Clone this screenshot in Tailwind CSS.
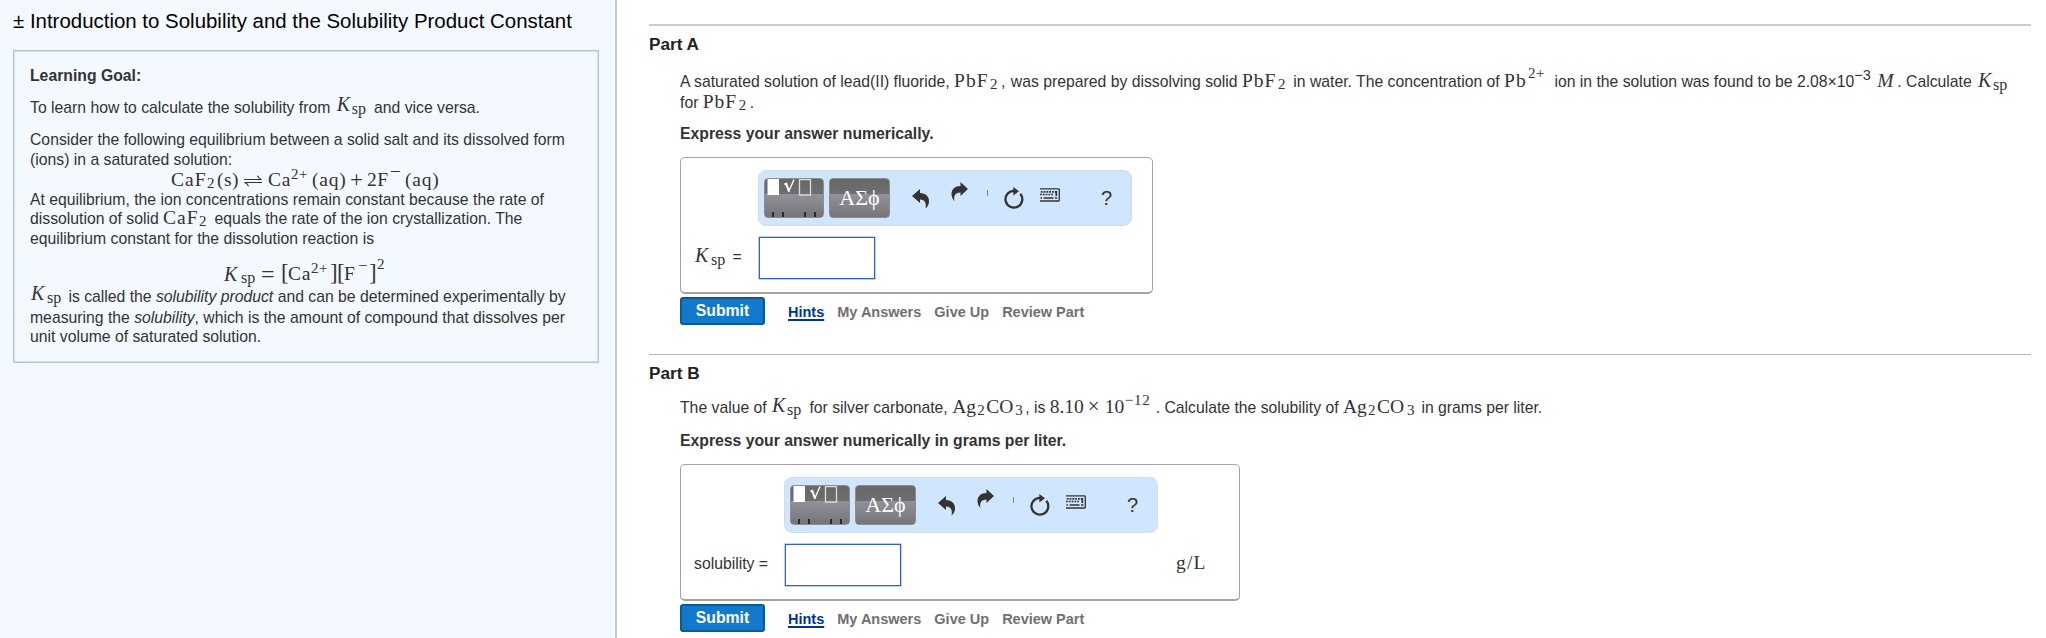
<!DOCTYPE html>
<html lang="en">
<head>
    <meta charset="UTF-8" />
    <meta name="viewport" content="width=device-width, initial-scale=1.0" />
    <title>Introduction to Solubility and the Solubility Product Constant</title>
    <script src="https://cdn.jsdelivr.net/npm/@tailwindcss/browser@4"></script>
</head>
<body class="bg-white font-['Liberation_Sans',Arial,sans-serif] text-[15.750px] leading-[20px] text-[#333] whitespace-nowrap">
    <!-- Shared icons -->
    <svg class="hidden">
        <symbol id="undo" viewBox="0 0 18 20">
            <path fill="#333" d="M0 7 L8 0 V4 C14 4 17 8 17 12 C17 15 16 18 13.5 19.5 C14.5 15 13.5 10.5 8 10.5 V14 Z"/>
        </symbol>
        <symbol id="redo" viewBox="0 0 18 20">
            <path fill="#333" d="M17 7 L9.5 0 V4 C4 4 0.5 7.500 0.500 12 C0.500 14.500 1.500 17 3.500 19 C2.500 14 4 10.500 9.500 10.500 V14 Z"/>
        </symbol>
        <symbol id="reset" viewBox="0 0 20 22">
            <path fill="none" stroke="#333" stroke-width="2.300" d="M10 3.800 A8.400 8.400 0 1 0 16.300 6.800"/>
            <path fill="#333" d="M9.300 0 L15 4.300 L9.300 8.600 Z"/>
        </symbol>
        <symbol id="keyboard" viewBox="0 0 20 14">
            <path fill="none" stroke="#333" stroke-width="1.300" d="M0 0.800 H18.500 Q19.300 0.800 19.300 1.600 V12.200 Q19.300 13 18.500 13 H0"/>
            <path fill="none" stroke="#333" stroke-width="1.700" stroke-dasharray="1.800 1" d="M0.800 3.800 H16 M0 6.500 H14"/>
            <path fill="none" stroke="#333" stroke-width="1.700" d="M0.500 10 H2 M3.500 10 H13.500 M15 10 H17.300 M16.300 3 V8"/>
        </symbol>
        <symbol id="templates" viewBox="0 0 60 40">
            <rect x="3.500" y="0" width="11.500" height="16" fill="#fff"/>
            <path fill="none" stroke="#fff" stroke-width="1.300" d="M24.500 13 L30 0.500"/>
            <path fill="none" stroke="#fff" stroke-width="2" d="M20.500 5.500 L22.300 4.800 L25 12.500"/>
            <rect x="35.500" y="0.600" width="11" height="15.400" fill="none" stroke="#ddd" stroke-width="1.300"/>
            <path stroke="#2b2b2b" stroke-width="2" d="M9 33 V38.500 M19 33 V38.500 M41 33 V38.500 M51 33 V38.500"/>
        </symbol>
    </svg>

    <div class="flex h-[638px] overflow-hidden">
        <!-- Introduction -->
        <div class="w-[617px] shrink-0 bg-[#f4f9ff] border-r-2 border-[#bccde1] pl-[13px] pt-[9px]">
            <h1 class="text-[20.46px] leading-[24px] text-black">± Introduction to Solubility and the Solubility Product Constant</h1>
            <div class="mt-[17px] w-[586px] h-[313px] border border-[#b0c4de] shadow-[inset_0_0_0_1px_#d3dfee] pl-[16px] pt-[15px]">
                <p class="h-[32px] font-bold">Learning Goal:</p>
                <p class="h-[32px]">To learn how to calculate the solubility from <span class="inline-block w-[35px] pl-[2px] leading-[0] font-['Liberation_Serif',serif]"><i class="inline-block w-[15px] text-[20px] relative -top-[2px]">K</i><span class="text-[16px] relative top-px">sp</span></span> and vice versa.</p>
                <p class="h-[20px]">Consider the following equilibrium between a solid salt and its dissolved form</p>
                <p class="h-[20px]">(ions) in a saturated solution:</p>
                <div class="h-[20px] pl-[141px] flex font-['Liberation_Serif',serif] text-[19.500px] leading-[20px]">
                    <span class="w-[36px] tracking-[1px]">CaF</span>
                    <span class="w-[10px] text-[15px] relative top-[3px]">2</span>
                    <span class="w-[27px] tracking-[0.500px]">(s)</span>
                    <svg class="w-[18px] h-[12px] mt-[5px]" viewBox="0 0 18 12"><path fill="none" stroke="#333" stroke-width="1.100" d="M0 4.500 H17.500 Q14.500 3.500 13.500 0.800 M18 7.500 H0.500 Q3.500 8.500 4.500 11.200"/></svg>
                    <span class="w-[23px] ml-[6px] tracking-[0.800px]">Ca</span>
                    <span class="w-[21px] text-[15px] relative -top-[6px] tracking-[0.500px]">2+</span>
                    <span class="w-[38px] tracking-[0.800px]">(aq)</span>
                    <span class="w-[17px] text-[23px]">+</span>
                    <span class="w-[23px] tracking-[0.500px]">2F</span>
                    <span class="w-[15px] text-[19px] relative -top-[8px]">−</span>
                    <span class="tracking-[0.800px]">(aq)</span>
                </div>
                <p class="h-[19px]">At equilibrium, the ion concentrations remain constant because the rate of</p>
                <p class="h-[20px]">dissolution of solid <span class="inline-block w-[47px] leading-[0] font-['Liberation_Serif',serif] text-[19.500px]"><span class="inline-block w-[36px] tracking-[1px]">CaF</span><span class="text-[15px] relative top-[2px]">2</span></span> equals the rate of the ion crystallization. The</p>
                <p class="h-[20px]">equilibrium constant for the dissolution reaction is</p>
                <div class="h-[38px] pl-[194px] pt-[15px] flex font-['Liberation_Serif',serif] text-[19.500px] leading-[20px]">
                    <i class="w-[17px] text-[20px]">K</i>
                    <span class="w-[20px] text-[16px] relative top-[4px]">sp</span>
                    <span class="w-[21px] text-[24px]">=</span>
                    <span class="w-[7px] text-[23px] -ml-px relative -top-px">[</span>
                    <span class="w-[23px] tracking-[0.800px]">Ca</span>
                    <span class="w-[20px] text-[15px] relative -top-[6px] tracking-[0.500px]">2+</span>
                    <span class="w-[7px] text-[23px] relative -top-px -ml-px">]</span>
                    <span class="w-[7px] text-[23px] relative -top-px">[</span>
                    <span class="w-[14px] tracking-[1px]">F</span>
                    <span class="w-[11px] text-[17px] relative -top-[8px]">−</span>
                    <span class="w-[8px] text-[23px] relative -top-px">]</span>
                    <span class="text-[15px] relative -top-[10px]">2</span>
                </div>
                <p class="h-[21px]"><span class="inline-block w-[34px] pl-px leading-[0] font-['Liberation_Serif',serif]"><i class="inline-block w-[16px] text-[20px] relative -top-[2px]">K</i><span class="text-[16px] relative top-px">sp</span></span> is called the <i>solubility product</i> and can be determined experimentally by</p>
                <p class="h-[19px]">measuring the <i>solubility</i>, which is the amount of compound that dissolves per</p>
                <p>unit volume of saturated solution.</p>
            </div>
        </div>

        <!-- Questions -->
        <div class="flex-1 pl-[32px] pr-[15px] pt-[24px]">
            <!-- Part A -->
            <section class="h-[330px] border-t-2 border-[#ccc]">
                <h2 class="pt-[8px] h-[46px] text-[17.200px] font-bold text-[#222]">Part A</h2>
                <div class="pl-[31px]">
                    <p class="h-[21px]">A saturated solution of lead(II) fluoride, <span class="inline-block w-[47px] leading-[0] font-['Liberation_Serif',serif] text-[19.500px]"><span class="inline-block w-[36px] tracking-[1px]">PbF</span><span class="text-[15px] relative top-[2px]">2</span></span>, <span class="ml-px">was</span> prepared by dissolving solid <span class="inline-block w-[47px] leading-[0] font-['Liberation_Serif',serif] text-[19.500px]"><span class="inline-block w-[36px] tracking-[1px]">PbF</span><span class="text-[15px] relative top-[2px]">2</span></span> in water. The concentration of <span class="inline-block w-[46px] leading-[0] font-['Liberation_Serif',serif] text-[19.500px]"><span class="inline-block w-[24px] tracking-[1px]">Pb</span><span class="text-[15px] relative -top-[9px] tracking-[0.500px]">2+</span></span> ion in the solution was found to be 2.08×10<span class="text-[14.500px] leading-[0] relative -top-[7px]">−3</span> <i class="inline-block w-[22px] pl-[2px] leading-[0] font-['Liberation_Serif',serif] text-[19.500px]">M</i>. Calculate <span class="inline-block w-[33px] pl-[2px] leading-[0] font-['Liberation_Serif',serif]"><i class="inline-block w-[15px] text-[20px]">K</i><span class="text-[16px] relative top-[3px]">sp</span></span></p>
                    <p class="h-[31px]">for <span class="inline-block w-[47px] leading-[0] font-['Liberation_Serif',serif] text-[19.500px]"><span class="inline-block w-[36px] tracking-[1px]">PbF</span><span class="text-[15px] relative top-[2px]">2</span></span>.</p>
                    <p class="h-[33px] font-bold">Express your answer numerically.</p>

                    <div class="w-[473px] h-[137px] border-[1.500px] border-[#a3a3a3] border-b-2 rounded-[5px] pl-[77px] pt-[12px]">
                        <div class="w-[374px] h-[56px] flex items-start rounded-[8px] border border-[#d8dade] bg-[#d0e6ff] pl-[5px]">
                            <button class="mt-[7px] w-[60px] h-[40px] rounded-[4px] border border-[#8d8d8d] bg-linear-to-b from-[#686868] from-0% via-[#6e6e6e] via-39% to-[#757577] overflow-hidden">
                                <span class="block w-full h-full bg-linear-to-b from-transparent from-40% via-[#93919b] via-40% to-[#757578]"><svg class="w-[60px] h-[40px] -ml-px"><use href="#templates"/></svg></span>
                            </button>
                            <button class="mt-[7px] ml-[5px] w-[61px] h-[40px] rounded-[4px] border border-[#8d8d8d] bg-linear-to-b from-[#686868] from-0% via-[#6e6e6e] via-39% to-[#757577] overflow-hidden">
                                <span class="block w-full h-full bg-linear-to-b from-transparent from-40% via-[#93919b] via-40% to-[#757578] font-['Liberation_Serif',serif] text-[22px] leading-[38px] text-white">ΑΣϕ</span>
                            </button>
                            <svg class="mt-[18px] ml-[22px] w-[18px] h-[20px]"><use href="#undo"/></svg>
                            <svg class="mt-[11px] ml-[21px] w-[18px] h-[20px]"><use href="#redo"/></svg>
                            <span class="mt-[19px] ml-[18px] w-px h-[6px] bg-[#7088a5]"></span>
                            <svg class="mt-[16px] ml-[16px] w-[20px] h-[22px]"><use href="#reset"/></svg>
                            <svg class="mt-[17px] ml-[16px] w-[20px] h-[14px]"><use href="#keyboard"/></svg>
                            <span class="mt-[17px] ml-[41px] text-[20px] leading-[20px]">?</span>
                        </div>
                        <div class="mt-[11px] -ml-[63px] flex">
                            <label class="w-[64px] pt-[10px]"><span class="inline-block w-[33px] leading-[0] font-['Liberation_Serif',serif]"><i class="inline-block w-[16px] text-[20px]">K</i><span class="text-[16px] relative top-[3px]">sp</span></span> =</label>
                            <input type="text" class="w-[116px] h-[42px] border-[1.500px] border-[#2f5fd0] bg-white shadow-[0_0_0_0.500px_#7da0ea]">
                        </div>
                    </div>
                    <div class="mt-[3px] flex font-bold text-[14.500px]">
                        <button class="w-[85px] h-[28px] rounded-[3px] border-2 border-[#0c5a94] bg-[#117acc] text-[15.750px] leading-[24px] text-white">Submit</button>
                        <a href="#" class="ml-[23px] mt-[5px] h-[20px] text-[#003399] underline underline-offset-2 decoration-2">Hints</a>
                        <a href="#" class="ml-[13px] mt-[5px] text-[#707070]">My Answers</a>
                        <a href="#" class="ml-[13px] mt-[5px] text-[#707070]">Give Up</a>
                        <a href="#" class="ml-[13px] mt-[5px] text-[#707070]">Review Part</a>
                    </div>
                </div>
            </section>

            <!-- Part B -->
            <section class="border-t border-[#bbb]">
                <h2 class="pt-[8px] h-[43px] text-[17.200px] font-bold text-[#222]">Part B</h2>
                <div class="pl-[31px]">
                    <p class="h-[33px]">The value of <span class="inline-block w-[34px] pl-px leading-[0] font-['Liberation_Serif',serif]"><i class="inline-block w-[15px] text-[20px] relative -top-px">K</i><span class="text-[16px] relative top-[2px]">sp</span></span> for silver carbonate, <span class="inline-block w-[73px] leading-[0] font-['Liberation_Serif',serif] text-[19.500px]"><span class="inline-block w-[25px]">Ag</span><span class="inline-block w-[9px] text-[15px] relative top-[2px]">2</span><span class="inline-block w-[29px]">CO</span><span class="text-[15px] relative top-[2px]">3</span></span>, is <span class="inline-block w-[106px] leading-[0] font-['Liberation_Serif',serif] text-[19.500px]"><span class="inline-block w-[38px]">8.10</span><span class="inline-block w-[17px] text-[21px]">×</span><span class="inline-block w-[20px]">10</span><span class="text-[15px] tracking-[0.800px] relative -top-[8px]">−12</span></span>. Calculate the solubility of <span class="inline-block w-[74px] leading-[0] font-['Liberation_Serif',serif] text-[19.500px]"><span class="inline-block w-[25px]">Ag</span><span class="inline-block w-[9px] text-[15px] relative top-[2px]">2</span><span class="inline-block w-[30px]">CO</span><span class="text-[15px] relative top-[2px]">3</span></span> in grams per liter.</p>
                    <p class="h-[33px] font-bold">Express your answer numerically in grams per liter.</p>

                    <div class="w-[560px] h-[137px] border-[1.500px] border-[#a3a3a3] border-b-2 rounded-[5px] pl-[103px] pt-[12px]">
                        <div class="w-[374px] h-[56px] flex items-start rounded-[8px] border border-[#d8dade] bg-[#d0e6ff] pl-[5px]">
                            <button class="mt-[7px] w-[60px] h-[40px] rounded-[4px] border border-[#8d8d8d] bg-linear-to-b from-[#686868] from-0% via-[#6e6e6e] via-39% to-[#757577] overflow-hidden">
                                <span class="block w-full h-full bg-linear-to-b from-transparent from-40% via-[#93919b] via-40% to-[#757578]"><svg class="w-[60px] h-[40px] -ml-px"><use href="#templates"/></svg></span>
                            </button>
                            <button class="mt-[7px] ml-[5px] w-[61px] h-[40px] rounded-[4px] border border-[#8d8d8d] bg-linear-to-b from-[#686868] from-0% via-[#6e6e6e] via-39% to-[#757577] overflow-hidden">
                                <span class="block w-full h-full bg-linear-to-b from-transparent from-40% via-[#93919b] via-40% to-[#757578] font-['Liberation_Serif',serif] text-[22px] leading-[38px] text-white">ΑΣϕ</span>
                            </button>
                            <svg class="mt-[18px] ml-[22px] w-[18px] h-[20px]"><use href="#undo"/></svg>
                            <svg class="mt-[11px] ml-[21px] w-[18px] h-[20px]"><use href="#redo"/></svg>
                            <span class="mt-[19px] ml-[18px] w-px h-[6px] bg-[#7088a5]"></span>
                            <svg class="mt-[16px] ml-[16px] w-[20px] h-[22px]"><use href="#reset"/></svg>
                            <svg class="mt-[17px] ml-[16px] w-[20px] h-[14px]"><use href="#keyboard"/></svg>
                            <span class="mt-[17px] ml-[41px] text-[20px] leading-[20px]">?</span>
                        </div>
                        <div class="mt-[11px] -ml-[90px] flex">
                            <label class="w-[91px] pt-[10px]">solubility =</label>
                            <input type="text" class="w-[116px] h-[42px] border-[1.500px] border-[#2f5fd0] bg-white shadow-[0_0_0_0.500px_#7da0ea]">
                            <span class="ml-[275px] pt-[9px] font-['Liberation_Serif',serif] text-[19.500px] tracking-[1.200px]">g/L</span>
                        </div>
                    </div>
                    <div class="mt-[3px] flex font-bold text-[14.500px]">
                        <button class="w-[85px] h-[28px] rounded-[3px] border-2 border-[#0c5a94] bg-[#117acc] text-[15.750px] leading-[24px] text-white">Submit</button>
                        <a href="#" class="ml-[23px] mt-[5px] h-[20px] text-[#003399] underline underline-offset-2 decoration-2">Hints</a>
                        <a href="#" class="ml-[13px] mt-[5px] text-[#707070]">My Answers</a>
                        <a href="#" class="ml-[13px] mt-[5px] text-[#707070]">Give Up</a>
                        <a href="#" class="ml-[13px] mt-[5px] text-[#707070]">Review Part</a>
                    </div>
                </div>
            </section>
        </div>
    </div>
</body>
</html>
